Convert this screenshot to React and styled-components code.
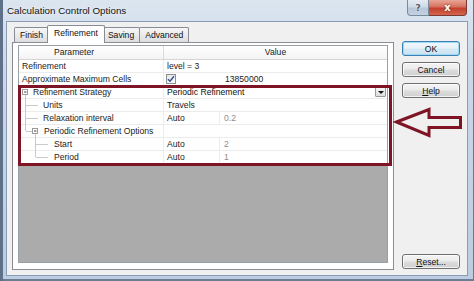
import React from "react";
import styled, { createGlobalStyle } from "styled-components";

const GlobalStyle = createGlobalStyle`
  html, body {
    margin: 0;
    padding: 0;
    background: #34465c;
  }
  body {
    font-family: "Liberation Sans", Arial, sans-serif;
  }
  * {
    box-sizing: border-box;
  }
`;

const RED = "#7f1524";
const FONT = "8.6px";

const Window = styled.div`
  position: relative;
  width: 474px;
  height: 281px;
  display: flex;
  flex-direction: column;
  overflow: hidden;
  background: linear-gradient(to bottom, #dbe5f0 0%, #cad8e8 25%, #bccde1 100%);
  box-shadow: inset 3px 0 0 #5f7189, inset -1px 0 0 #66798f, inset 0 -2px 0 #6a7d94;
`;

const TitleBar = styled.div`
  height: 21px;
  display: flex;
  align-items: flex-start;
  padding-left: 7px;
`;

const Title = styled.div`
  flex: 1;
  font-size: 9.8px;
  line-height: 22px;
  color: #151515;
  text-shadow: 0 0 5px rgba(255, 255, 255, 0.95);
`;

const CaptionButtons = styled.div`
  display: flex;
  margin-right: 7px;
`;

const CaptionButton = styled.div`
  height: 16px;
  width: ${(p) => (p.$close ? 38 : 22)}px;
  display: flex;
  align-items: center;
  justify-content: center;
  border: 1px solid ${(p) => (p.$close ? "#7d3a33" : "#7a8ba0")};
  border-top: none;
  border-left: ${(p) => (p.$close ? "none" : undefined)};
  border-radius: ${(p) => (p.$close ? "0 0 4px 0" : "0 0 0 4px")};
  background: ${(p) =>
    p.$close
      ? "linear-gradient(to bottom, #e8a597 0%, #d7725f 45%, #c2412c 55%, #d4654c 100%)"
      : "linear-gradient(to bottom, #e3eaf2 0%, #cfdae7 45%, #b7c6d8 55%, #c4d2e2 100%)"};
  color: ${(p) => (p.$close ? "#fff" : "#4d5a6a")};
  font-size: ${(p) => (p.$close ? "10px" : "9px")};
  font-weight: bold;
  font-family: "DejaVu Sans", sans-serif;
  text-shadow: ${(p) => (p.$close ? "0 0 2px #6a1a10" : "0 0 2px #fff")};
`;

const Client = styled.div`
  flex: 1;
  margin: 0 6px 5px 6px;
  border: 1px solid #8b9db4;
  background: #f0f0f0;
  display: flex;
  gap: 8px;
  padding: 3px 7px 5px 5px;
`;

const TabArea = styled.div`
  width: 382px;
  display: flex;
  flex-direction: column;
`;

const TabStrip = styled.div`
  position: relative;
  z-index: 2;
  height: 17px;
  display: flex;
  align-items: flex-end;
  padding-left: 2px;
`;

const Tab = styled.div`
  height: ${(p) => (p.$active ? 18 : 15)}px;
  margin: 0 ${(p) => (p.$active ? -2 : 0)}px ${(p) => (p.$active ? -1 : 0)}px;
  margin-left: ${(p) => (p.$active ? -2 : p.$first ? 0 : -1)}px;
  padding: 0 ${(p) => (p.$active ? 6 : 5)}px;
  position: relative;
  z-index: ${(p) => (p.$active ? 2 : 1)};
  border: 1px solid #898c95;
  border-bottom: none;
  border-radius: 2px 2px 0 0;
  background: ${(p) =>
    p.$active ? "#ffffff" : "linear-gradient(to bottom, #f6f6f6 0%, #ebebeb 50%, #dddddd 100%)"};
  font-size: ${FONT};
  line-height: 14px;
  color: #111;
  white-space: nowrap;
`;

const Panel = styled.div`
  flex: 1;
  display: flex;
  flex-direction: column;
  border: 1px solid #898c95;
  background: #ffffff;
  padding: 2px 5px 6px 5px;
`;

const Grid = styled.div`
  flex: 1;
  display: flex;
  flex-direction: column;
  border: 1px solid #9aa0a8;
  background: #ffffff;
`;

const HeaderRow = styled.div`
  height: 14px;
  display: grid;
  grid-template-columns: 145px 1fr;
  border-bottom: 1px solid #d5d5d5;
  background: linear-gradient(to bottom, #ffffff 0%, #f4f4f4 100%);
`;

const HeaderCell = styled.div`
  font-size: ${FONT};
  line-height: 13px;
  color: #1a1a1a;
  padding-left: ${(p) => p.$pad || 0}px;
  text-align: ${(p) => p.$align || "left"};
  border-right: ${(p) => (p.$divider ? "1px solid #dcdcdc" : "none")};
`;

const Row = styled.div`
  height: 13px;
  display: grid;
  grid-template-columns: 145px 1fr;
  border-bottom: 1px solid #ececec;
`;

const NameCell = styled.div`
  display: flex;
  align-items: center;
  padding-left: ${(p) => (p.$tree ? 0 : 3)}px;
  border-right: 1px solid #ececec;
  font-size: ${FONT};
  line-height: 12px;
  color: #1c1c1c;
  white-space: nowrap;
`;

const ValueCell = styled.div`
  display: grid;
  grid-template-columns: ${(p) => (p.$split ? "56px 1fr" : "1fr")};
  font-size: ${FONT};
  line-height: 12px;
  white-space: nowrap;
`;

const ValuePart = styled.div`
  display: flex;
  align-items: center;
  padding-left: ${(p) => (p.$pad !== undefined ? p.$pad : 3)}px;
  color: ${(p) => (p.$muted ? "#8d8d8d" : "#1c1c1c")};
  border-right: ${(p) => (p.$divider ? "1px solid #ececec" : "none")};
`;

const CheckBox = styled.div`
  width: 10px;
  height: 10px;
  border: 1px solid #8e8f8f;
  background: linear-gradient(135deg, #e4e4e4 0%, #ffffff 100%);
  display: flex;
  align-items: center;
  justify-content: center;
`;

const Combo = styled.div`
  display: flex;
  align-items: center;
  height: 12px;
  padding-left: 3px;
  padding-right: 1px;
  color: #111;
`;

const ComboText = styled.span`
  flex: 1;
`;

const ComboButton = styled.div`
  width: 11px;
  height: 10px;
  border: 1px solid #9a9a9a;
  border-radius: 1px;
  background: linear-gradient(to bottom, #f5f5f5 0%, #dedede 100%);
  display: flex;
  align-items: center;
  justify-content: center;

  &::after {
    content: "";
    border-left: 3px solid transparent;
    border-right: 3px solid transparent;
    border-top: 3px solid #111;
  }
`;

const Filler = styled.div`
  flex: 1;
  background: #ababab;
`;

const ButtonColumn = styled.div`
  width: 58px;
  display: flex;
  flex-direction: column;
  gap: 6px;
  padding-top: 16px;
  padding-bottom: 1px;
`;

const Button = styled.div`
  height: 15px;
  display: flex;
  align-items: center;
  justify-content: center;
  margin-top: ${(p) => (p.$bottom ? "auto" : "0")};
  border: 1px solid ${(p) => (p.$default ? "#3c7fb1" : "#707070")};
  border-radius: 3px;
  background: ${(p) =>
    p.$default
      ? "linear-gradient(to bottom, #f1f8fc 0%, #e6f1f8 48%, #d5e9f4 52%, #c9e3f1 100%)"
      : "linear-gradient(to bottom, #f4f4f4 0%, #ebebeb 48%, #dddddd 52%, #cfcfcf 100%)"};
  box-shadow: inset 0 0 0 1px
    ${(p) => (p.$default ? "rgba(150, 215, 245, 0.9)" : "rgba(255, 255, 255, 0.75)")};
  font-size: ${FONT};
  color: #111;
`;

const Key = styled.span`
  text-decoration: underline;
`;

const Highlight = styled.div`
  position: absolute;
  left: 18px;
  top: 85px;
  width: 374px;
  height: 81px;
  border: 3px solid ${RED};
  pointer-events: none;
`;

const ArrowMark = styled.svg`
  position: absolute;
  left: 390px;
  top: 104px;
  pointer-events: none;
`;

const LINE = "#c9c9c9";

const TreeGlyph = ({ kind, width }) => {
  const box = (cx) => (
    <g>
      <rect x={cx - 2.5} y={3.5} width={5} height={5} fill="#fff" stroke="#9a9a9a" strokeWidth="1" />
      <line x1={cx - 1} y1={6} x2={cx + 1.5} y2={6} stroke="#444" strokeWidth="1" />
    </g>
  );
  const ln = { stroke: LINE, strokeWidth: 1 };
  return (
    <svg width={width} height={12} style={{ overflow: "visible", flexShrink: 0 }}>
      {kind === "root" && (
        <>
          {box(6)}
          <line x1={6.5} y1={9} x2={6.5} y2={13} {...ln} />
        </>
      )}
      {kind === "child" && (
        <>
          <line x1={6.5} y1={0} x2={6.5} y2={13} {...ln} />
          <line x1={7} y1={6.5} x2={19} y2={6.5} {...ln} />
        </>
      )}
      {kind === "lastGroup" && (
        <>
          <line x1={6.5} y1={0} x2={6.5} y2={6} {...ln} />
          <line x1={7} y1={6.5} x2={13} y2={6.5} {...ln} />
          {box(16)}
          <line x1={16.5} y1={9} x2={16.5} y2={13} {...ln} />
        </>
      )}
      {kind === "grandchild" && (
        <>
          <line x1={16.5} y1={0} x2={16.5} y2={13} {...ln} />
          <line x1={17} y1={6.5} x2={29} y2={6.5} {...ln} />
        </>
      )}
      {kind === "lastGrandchild" && (
        <>
          <line x1={16.5} y1={0} x2={16.5} y2={6} {...ln} />
          <line x1={17} y1={6.5} x2={29} y2={6.5} {...ln} />
        </>
      )}
    </svg>
  );
};

const rows = [
  { name: "Refinement", value: "level = 3" },
  { name: "Approximate Maximum Cells", check: true, extra: "13850000" },
  { name: "Refinement Strategy", tree: "root", indent: 14, combo: "Periodic Refinement" },
  { name: "Units", tree: "child", indent: 24, value: "Travels" },
  { name: "Relaxation interval", tree: "child", indent: 24, value: "Auto", extra: "0.2" },
  { name: "Periodic Refinement Options", tree: "lastGroup", indent: 25 },
  { name: "Start", tree: "grandchild", indent: 35, value: "Auto", extra: "2" },
  { name: "Period", tree: "lastGrandchild", indent: 35, value: "Auto", extra: "1" },
];

const tabs = ["Finish", "Refinement", "Saving", "Advanced"];

const App = () => {
  return (
    <>
      <GlobalStyle />
      <Window>
        <TitleBar>
          <Title>Calculation Control Options</Title>
          <CaptionButtons>
            <CaptionButton>?</CaptionButton>
            <CaptionButton $close>x</CaptionButton>
          </CaptionButtons>
        </TitleBar>

        <Client>
          <TabArea>
            <TabStrip>
              {tabs.map((t, i) => (
                <Tab key={t} $first={i === 0} $active={t === "Refinement"}>
                  {t}
                </Tab>
              ))}
            </TabStrip>
            <Panel>
              <Grid>
                <HeaderRow>
                  <HeaderCell $pad={35} $divider>
                    Parameter
                  </HeaderCell>
                  <HeaderCell $align="center">Value</HeaderCell>
                </HeaderRow>

                {rows.map((r) => (
                  <Row key={r.name}>
                    <NameCell $tree={!!r.tree}>
                      {r.tree && <TreeGlyph kind={r.tree} width={r.indent} />}
                      {r.name}
                    </NameCell>
                    {r.combo ? (
                      <ValueCell>
                        <Combo>
                          <ComboText>{r.combo}</ComboText>
                          <ComboButton />
                        </Combo>
                      </ValueCell>
                    ) : r.check ? (
                      <ValueCell $split>
                        <ValuePart $pad={2}>
                          <CheckBox>
                            <svg width="8" height="8" viewBox="0 0 8 8">
                              <path d="M1 4.2 L3 6.3 L7 1.2" fill="none" stroke="#2a4f96" strokeWidth="1.4" />
                            </svg>
                          </CheckBox>
                        </ValuePart>
                        <ValuePart $pad={5}>{r.extra}</ValuePart>
                      </ValueCell>
                    ) : r.extra ? (
                      <ValueCell $split>
                        <ValuePart $divider>{r.value}</ValuePart>
                        <ValuePart $pad={4} $muted>
                          {r.extra}
                        </ValuePart>
                      </ValueCell>
                    ) : (
                      <ValueCell>
                        <ValuePart>{r.value}</ValuePart>
                      </ValueCell>
                    )}
                  </Row>
                ))}
                <Filler />
              </Grid>
            </Panel>
          </TabArea>

          <ButtonColumn>
            <Button $default>OK</Button>
            <Button>Cancel</Button>
            <Button>
              <Key>H</Key>elp
            </Button>
            <Button $bottom>
              <Key>R</Key>eset...
            </Button>
          </ButtonColumn>
        </Client>

        <Highlight />
        <ArrowMark width="76" height="38" viewBox="0 0 76 38">
          <polygon
            points="6.5,18 39,5.5 39,13.5 70.5,13.5 70.5,23.5 39,23.5 39,31.5"
            fill="none"
            stroke={RED}
            strokeWidth="3"
            strokeLinejoin="miter"
          />
        </ArrowMark>
      </Window>
    </>
  );
};

export default App;
